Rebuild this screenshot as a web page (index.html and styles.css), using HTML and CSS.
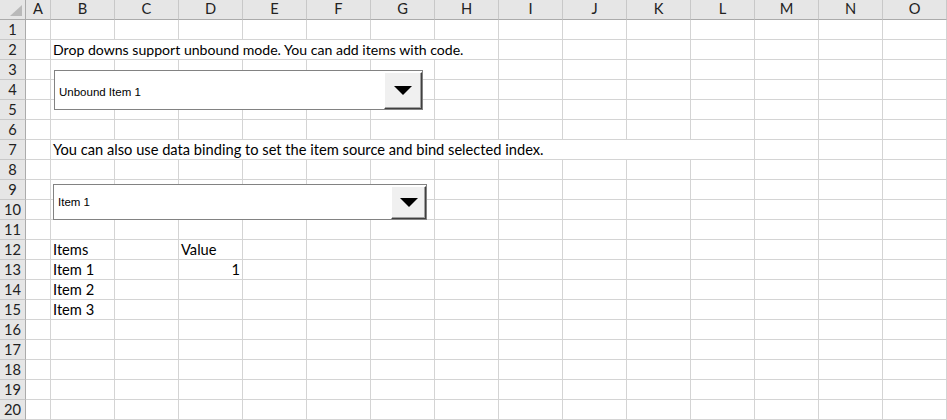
FILE: index.html
```
<!DOCTYPE html>
<html>
<head>
<meta charset="utf-8">
<link rel="stylesheet" href="styles.css">
</head>
<body>
<div class="sheet">
  <div class="row head">
    <div class="corner"><span class="tri"></span></div>
    <div class="ch">A</div><div class="ch">B</div><div class="ch">C</div><div class="ch">D</div><div class="ch">E</div><div class="ch">F</div><div class="ch">G</div><div class="ch">H</div><div class="ch">I</div><div class="ch">J</div><div class="ch">K</div><div class="ch">L</div><div class="ch">M</div><div class="ch">N</div><div class="ch">O</div>
  </div>
  <div class="row"><div class="rh">1</div><div class="c"></div><div class="c"></div><div class="c"></div><div class="c"></div><div class="c"></div><div class="c"></div><div class="c"></div><div class="c"></div><div class="c"></div><div class="c"></div><div class="c"></div><div class="c"></div><div class="c"></div><div class="c"></div><div class="c"></div></div>
  <div class="row"><div class="rh">2</div><div class="c"></div><div class="c span7 small">Drop downs support unbound mode. You can add items with code.</div><div class="c"></div><div class="c"></div><div class="c"></div><div class="c"></div><div class="c"></div><div class="c"></div><div class="c"></div></div>
  <div class="row"><div class="rh">3</div><div class="c"></div><div class="c"></div><div class="c"></div><div class="c"></div><div class="c"></div><div class="c"></div><div class="c"></div><div class="c"></div><div class="c"></div><div class="c"></div><div class="c"></div><div class="c"></div><div class="c"></div><div class="c"></div><div class="c"></div></div>
  <div class="row"><div class="rh">4</div><div class="c"></div><div class="c"></div><div class="c"></div><div class="c"></div><div class="c"></div><div class="c"></div><div class="c"></div><div class="c"></div><div class="c"></div><div class="c"></div><div class="c"></div><div class="c"></div><div class="c"></div><div class="c"></div><div class="c"></div></div>
  <div class="row"><div class="rh">5</div><div class="c"></div><div class="c"></div><div class="c"></div><div class="c"></div><div class="c"></div><div class="c"></div><div class="c"></div><div class="c"></div><div class="c"></div><div class="c"></div><div class="c"></div><div class="c"></div><div class="c"></div><div class="c"></div><div class="c"></div></div>
  <div class="row"><div class="rh">6</div><div class="c"></div><div class="c"></div><div class="c"></div><div class="c"></div><div class="c"></div><div class="c"></div><div class="c"></div><div class="c"></div><div class="c"></div><div class="c"></div><div class="c"></div><div class="c"></div><div class="c"></div><div class="c"></div><div class="c"></div></div>
  <div class="row"><div class="rh">7</div><div class="c"></div><div class="c span11">You can also use data binding to set the item source and bind selected index.</div><div class="c"></div><div class="c"></div><div class="c"></div></div>
  <div class="row"><div class="rh">8</div><div class="c"></div><div class="c"></div><div class="c"></div><div class="c"></div><div class="c"></div><div class="c"></div><div class="c"></div><div class="c"></div><div class="c"></div><div class="c"></div><div class="c"></div><div class="c"></div><div class="c"></div><div class="c"></div><div class="c"></div></div>
  <div class="row"><div class="rh">9</div><div class="c"></div><div class="c"></div><div class="c"></div><div class="c"></div><div class="c"></div><div class="c"></div><div class="c"></div><div class="c"></div><div class="c"></div><div class="c"></div><div class="c"></div><div class="c"></div><div class="c"></div><div class="c"></div><div class="c"></div></div>
  <div class="row"><div class="rh">10</div><div class="c"></div><div class="c"></div><div class="c"></div><div class="c"></div><div class="c"></div><div class="c"></div><div class="c"></div><div class="c"></div><div class="c"></div><div class="c"></div><div class="c"></div><div class="c"></div><div class="c"></div><div class="c"></div><div class="c"></div></div>
  <div class="row"><div class="rh">11</div><div class="c"></div><div class="c"></div><div class="c"></div><div class="c"></div><div class="c"></div><div class="c"></div><div class="c"></div><div class="c"></div><div class="c"></div><div class="c"></div><div class="c"></div><div class="c"></div><div class="c"></div><div class="c"></div><div class="c"></div></div>
  <div class="row"><div class="rh">12</div><div class="c"></div><div class="c">Items</div><div class="c"></div><div class="c">Value</div><div class="c"></div><div class="c"></div><div class="c"></div><div class="c"></div><div class="c"></div><div class="c"></div><div class="c"></div><div class="c"></div><div class="c"></div><div class="c"></div><div class="c"></div></div>
  <div class="row"><div class="rh">13</div><div class="c"></div><div class="c">Item 1</div><div class="c"></div><div class="c num">1</div><div class="c"></div><div class="c"></div><div class="c"></div><div class="c"></div><div class="c"></div><div class="c"></div><div class="c"></div><div class="c"></div><div class="c"></div><div class="c"></div><div class="c"></div></div>
  <div class="row"><div class="rh">14</div><div class="c"></div><div class="c">Item 2</div><div class="c"></div><div class="c"></div><div class="c"></div><div class="c"></div><div class="c"></div><div class="c"></div><div class="c"></div><div class="c"></div><div class="c"></div><div class="c"></div><div class="c"></div><div class="c"></div><div class="c"></div></div>
  <div class="row"><div class="rh">15</div><div class="c"></div><div class="c">Item 3</div><div class="c"></div><div class="c"></div><div class="c"></div><div class="c"></div><div class="c"></div><div class="c"></div><div class="c"></div><div class="c"></div><div class="c"></div><div class="c"></div><div class="c"></div><div class="c"></div><div class="c"></div></div>
  <div class="row"><div class="rh">16</div><div class="c"></div><div class="c"></div><div class="c"></div><div class="c"></div><div class="c"></div><div class="c"></div><div class="c"></div><div class="c"></div><div class="c"></div><div class="c"></div><div class="c"></div><div class="c"></div><div class="c"></div><div class="c"></div><div class="c"></div></div>
  <div class="row"><div class="rh">17</div><div class="c"></div><div class="c"></div><div class="c"></div><div class="c"></div><div class="c"></div><div class="c"></div><div class="c"></div><div class="c"></div><div class="c"></div><div class="c"></div><div class="c"></div><div class="c"></div><div class="c"></div><div class="c"></div><div class="c"></div></div>
  <div class="row"><div class="rh">18</div><div class="c"></div><div class="c"></div><div class="c"></div><div class="c"></div><div class="c"></div><div class="c"></div><div class="c"></div><div class="c"></div><div class="c"></div><div class="c"></div><div class="c"></div><div class="c"></div><div class="c"></div><div class="c"></div><div class="c"></div></div>
  <div class="row"><div class="rh">19</div><div class="c"></div><div class="c"></div><div class="c"></div><div class="c"></div><div class="c"></div><div class="c"></div><div class="c"></div><div class="c"></div><div class="c"></div><div class="c"></div><div class="c"></div><div class="c"></div><div class="c"></div><div class="c"></div><div class="c"></div></div>
  <div class="row"><div class="rh">20</div><div class="c"></div><div class="c"></div><div class="c"></div><div class="c"></div><div class="c"></div><div class="c"></div><div class="c"></div><div class="c"></div><div class="c"></div><div class="c"></div><div class="c"></div><div class="c"></div><div class="c"></div><div class="c"></div><div class="c"></div></div>

  <div class="dd dd-unbound">
    <div class="dd-text">Unbound Item 1</div>
    <div class="dd-btn"><svg class="arrow" width="18" height="9" viewBox="0 0 18 9"><polygon points="0,0 18,0 9,9" fill="#000"/></svg></div>
  </div>
  <div class="dd dd-bound">
    <div class="dd-text">Item 1</div>
    <div class="dd-btn"><svg class="arrow" width="18" height="9" viewBox="0 0 18 9"><polygon points="0,0 18,0 9,9" fill="#000"/></svg></div>
  </div>
</div>
</body>
</html>
```
FILE: styles.css
```
html, body {
  margin: 0;
  padding: 0;
  background: #fff;
}

.sheet {
  position: relative;
  width: 947px;
  height: 420px;
  overflow: hidden;
  font-family: Lato, "Open Sans", sans-serif;
  font-size: 14.67px;
  color: #000;
}

.row {
  display: grid;
  grid-template-columns: 26px 25px repeat(14, 64px);
  height: 20px;
}

.row > div {
  box-sizing: border-box;
  height: 20px;
}

.corner {
  position: relative;
  background: #e6e6e6;
  border-right: 1px solid #ababab;
  border-bottom: 1px solid #ababab;
}

.tri {
  position: absolute;
  right: 3px;
  bottom: 3px;
  width: 0;
  height: 0;
  border-left: 12px solid transparent;
  border-bottom: 11px solid #b9b9b9;
}

.ch {
  background: #e6e6e6;
  border-right: 1px solid #c8c8c8;
  border-bottom: 1px solid #ababab;
  text-align: center;
  line-height: 18px;
  color: #222;
}

.rh {
  background: #e6e6e6;
  border-right: 1px solid #ababab;
  border-bottom: 1px solid #c8c8c8;
  display: flex;
  align-items: flex-end;
  justify-content: center;
  padding-bottom: 1px;
  line-height: 17px;
  color: #222;
}

.c {
  border-right: 1px solid #d4d4d4;
  border-bottom: 1px solid #d4d4d4;
  display: flex;
  align-items: flex-end;
  padding: 0 2px 1px 2px;
  line-height: 17px;
  white-space: nowrap;
}

.small {
  font-size: 14.1px;
}

.span7 {
  grid-column: span 7;
}

.span11 {
  grid-column: span 11;
}

.num {
  justify-content: flex-end;
}

/* floating combo box controls over the grid */
.dd {
  position: absolute;
  box-sizing: border-box;
  display: flex;
  background: #fff;
  border: 1px solid #828282;
  font-family: "Liberation Sans", Arial, sans-serif;
  font-size: 11.5px;
  color: #000;
}

.dd-unbound {
  left: 54px;
  top: 70px;
  width: 369px;
  height: 40px;
}

.dd-bound {
  left: 53px;
  top: 184px;
  width: 374px;
  height: 36px;
}

.dd-text {
  flex: 1;
  display: flex;
  align-items: center;
  padding-left: 4px;
}

.dd-unbound .dd-text {
  padding-top: 3px;
}

.dd-btn {
  box-sizing: border-box;
  display: flex;
  align-items: center;
  justify-content: center;
  background: #f0f0f0;
  border-top: 1px solid #fff;
  border-left: 1px solid #fff;
  border-right: 1px solid #404040;
  border-bottom: 1px solid #404040;
  box-shadow: inset -1px -1px 0 #a0a0a0;
  margin: 1px 0 0 0;
}

.dd-unbound .dd-btn {
  width: 38px;
}

.dd-bound .dd-btn {
  width: 35px;
}

.arrow {
  display: block;
}
```
